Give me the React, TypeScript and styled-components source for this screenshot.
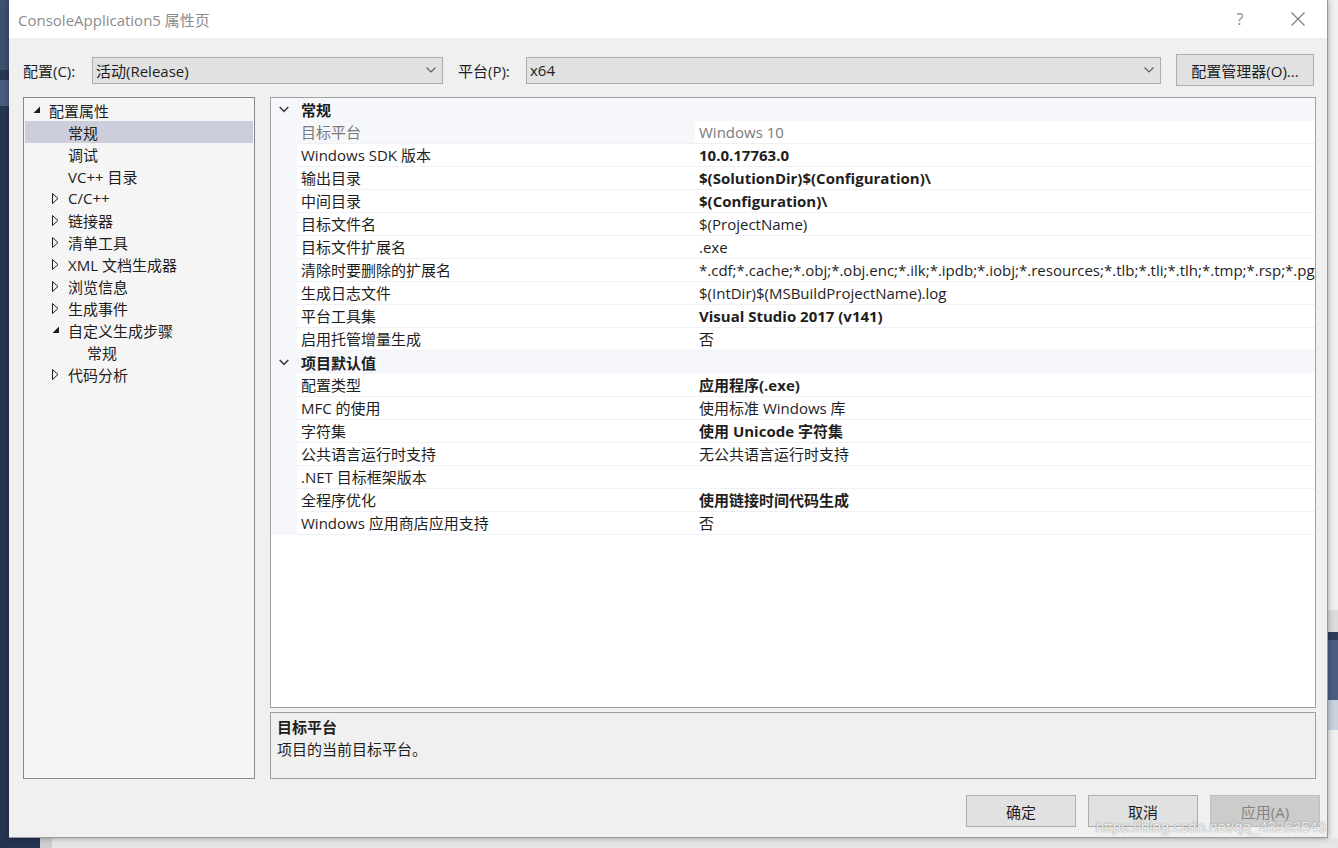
import React from "react";
import styled, { createGlobalStyle } from "styled-components";

const Global = createGlobalStyle`
  html, body { margin: 0; padding: 0; }
  body {
    width: 1338px;
    height: 848px;
    overflow: hidden;
    font-family: "Open Sans", "Noto Sans CJK SC", sans-serif;
    font-size: 15px;
    color: #1e1e1e;
  }
`;

const Desktop = styled.div`
  position: relative;
  width: 1338px;
  height: 848px;
  display: flex;
  background:
    linear-gradient(to bottom, #3f4f6e 0 70px, #2a3852 70px 80px, #4a5d80 80px 106px, #27364f 106px);
`;

const LeftGap = styled.div`
  width: 9px;
  flex: none;
`;

const RightGap = styled.div`
  flex: 1;
  background: linear-gradient(to bottom, #f0f0f0 0 610px, #dcdcdc 610px 632px, #2d3d5c 632px 640px, #4a5e84 640px 700px, #c9d1df 700px 730px, #f0f0f0 730px);
`;

const Dialog = styled.div`
  position: relative;
  width: 1319px;
  height: 838px;
  background: #f0f0f0;
  display: flex;
  flex-direction: column;
  box-shadow: 0 0 6px rgba(0, 0, 0, 0.35);
  border-right: 1px solid #9a9a9a;
  border-bottom: 1px solid #9a9a9a;
  box-sizing: border-box;
  z-index: 1;
`;

const TitleBar = styled.div`
  height: 38px;
  background: #ffffff;
  display: flex;
  align-items: center;
  padding-left: 9px;
  flex: none;
`;

const Title = styled.div`
  flex: 1;
  color: #8c8c8c;
  font-size: 15px;
`;

const TitleBtn = styled.div`
  width: 58px;
  height: 38px;
  display: flex;
  align-items: center;
  justify-content: center;
  color: #8c8c8c;
  font-size: 16px;
`;

const ConfigRow = styled.div`
  display: flex;
  align-items: center;
  height: 32px;
  margin-top: 16px;
  padding: 0 11px 0 14px;
`;

const Label = styled.span<{ $w: number; $gap?: number }>`
  width: ${(p) => p.$w}px;
  padding-left: ${(p) => p.$gap ?? 0}px;
  flex: none;
`;

const Combo = styled.div<{ $w: number }>`
  width: ${(p) => p.$w}px;
  height: 27px;
  box-sizing: border-box;
  background: #e1e1e1;
  border: 1px solid #adadad;
  display: flex;
  align-items: center;
  padding: 0 6px 0 3px;
  flex: none;
`;

const ComboText = styled.span`
  flex: 1;
`;

const Button = styled.div<{ $disabled?: boolean }>`
  width: 110px;
  height: 32px;
  box-sizing: border-box;
  background: ${(p) => (p.$disabled ? "#cccccc" : "#e1e1e1")};
  border: 1px solid ${(p) => (p.$disabled ? "#bfbfbf" : "#adadad")};
  color: ${(p) => (p.$disabled ? "#838383" : "#1e1e1e")};
  display: flex;
  align-items: center;
  justify-content: center;
  flex: none;
`;

const WideButton = styled(Button)`
  width: 138px;
  margin-left: 15px;
`;

const Main = styled.div`
  display: flex;
  margin-top: 11px;
  padding: 0 11px 0 14px;
  gap: 15px;
  height: 682px;
`;

const Tree = styled.div`
  width: 232px;
  flex: none;
  box-sizing: border-box;
  background: #f5f5f5;
  border: 1px solid #828790;
  padding: 1px 1px;
`;

const TreeRow = styled.div<{ $level: number; $selected?: boolean }>`
  height: 22px;
  display: flex;
  align-items: center;
  padding-left: ${(p) => 5 + p.$level * 19}px;
  background: ${(p) => (p.$selected ? "#cccedb" : "transparent")};
`;

const Twisty = styled.span`
  width: 19px;
  flex: none;
  display: flex;
  align-items: center;
  padding-left: 3px;
  box-sizing: border-box;
`;

const RightCol = styled.div`
  flex: 1;
  display: flex;
  flex-direction: column;
  gap: 4px;
`;

const Grid = styled.div`
  flex: 1;
  box-sizing: border-box;
  background: #ffffff;
  border: 1px solid #a0a0a0;
  overflow: hidden;
`;

const CatRow = styled.div`
  height: 23px;
  display: flex;
  align-items: center;
  background: #f5f7fa;
  font-weight: 700;
`;

const CatChevron = styled.span`
  width: 26px;
  flex: none;
  display: flex;
  justify-content: center;
`;

const CatText = styled.span`
  padding-left: 4px;
`;

const PropRow = styled.div<{ $readonly?: boolean }>`
  height: 23px;
  display: grid;
  grid-template-columns: 26px 398px minmax(0, 1fr);
  background: #ffffff;
  & > span:nth-child(1) {
    background: #f5f7fa;
  }
  & > span:nth-child(2) {
    background: ${(p) => (p.$readonly ? "#f5f7fa" : "#ffffff")};
    color: ${(p) => (p.$readonly ? "#7a7a7a" : "inherit")};
  }
  & > span:nth-child(3) {
    color: ${(p) => (p.$readonly ? "#7a7a7a" : "inherit")};
  }
`;

const Cell = styled.span<{ $bold?: boolean }>`
  display: block;
  line-height: 22px;
  padding-left: 4px;
  white-space: nowrap;
  overflow: hidden;
  border-bottom: 1px solid #f0f1f4;
  font-weight: ${(p) => (p.$bold ? 700 : 400)};
`;

const Gutter = styled.span`
  display: block;
`;

const Desc = styled.div`
  height: 67px;
  flex: none;
  box-sizing: border-box;
  border: 1px solid #a0a0a0;
  padding: 3px 6px;
  line-height: 22px;
`;

const DescTitle = styled.div`
  font-weight: 700;
`;

const Footer = styled.div`
  display: flex;
  justify-content: flex-end;
  gap: 12px;
  padding: 16px 7px 0 0;
`;

const Watermark = styled.div`
  position: absolute;
  right: 1px;
  bottom: 2px;
  color: rgba(255, 255, 255, 0.85);
  font-family: "Liberation Sans", sans-serif;
  font-size: 15px;
  text-shadow: 0 0 1px rgba(90, 90, 90, 0.6), 0 0 2px rgba(120, 120, 120, 0.35);
`;

const BottomStrip = styled.div`
  position: absolute;
  left: 0;
  bottom: 0;
  width: 1338px;
  height: 10px;
  background: linear-gradient(to right, #243350 0 40px, #cfcfcf 40px 52px, #e6e6e6 52px);
`;

const Chevron = () => (
  <svg width="10" height="6" viewBox="0 0 10 6">
    <path d="M0.5 0.5 L5 5 L9.5 0.5" fill="none" stroke="#606060" strokeWidth="1.2" />
  </svg>
);

const CatIcon = () => (
  <svg width="10" height="7" viewBox="0 0 10 7">
    <path d="M0.7 1 L5 5.3 L9.3 1" fill="none" stroke="#404040" strokeWidth="1.6" />
  </svg>
);

const Expanded = () => (
  <svg width="8" height="8" viewBox="0 0 8 8">
    <path d="M7 0.5 L7 7 L0.5 7 Z" fill="#1e1e1e" />
  </svg>
);

const Collapsed = () => (
  <svg width="7" height="11" viewBox="0 0 7 11">
    <path d="M0.5 0.5 L6 5.5 L0.5 10.5 Z" fill="none" stroke="#1e1e1e" strokeWidth="1" />
  </svg>
);

type Node = { label: string; level: number; state?: "open" | "closed"; selected?: boolean };

const tree: Node[] = [
  { label: "配置属性", level: 0, state: "open" },
  { label: "常规", level: 1, selected: true },
  { label: "调试", level: 1 },
  { label: "VC++ 目录", level: 1 },
  { label: "C/C++", level: 1, state: "closed" },
  { label: "链接器", level: 1, state: "closed" },
  { label: "清单工具", level: 1, state: "closed" },
  { label: "XML 文档生成器", level: 1, state: "closed" },
  { label: "浏览信息", level: 1, state: "closed" },
  { label: "生成事件", level: 1, state: "closed" },
  { label: "自定义生成步骤", level: 1, state: "open" },
  { label: "常规", level: 2 },
  { label: "代码分析", level: 1, state: "closed" },
];

type Prop = { name: string; value: string; bold?: boolean; readonly?: boolean };

const general: Prop[] = [
  { name: "目标平台", value: "Windows 10", readonly: true },
  { name: "Windows SDK 版本", value: "10.0.17763.0", bold: true },
  { name: "输出目录", value: "$(SolutionDir)$(Configuration)\\", bold: true },
  { name: "中间目录", value: "$(Configuration)\\", bold: true },
  { name: "目标文件名", value: "$(ProjectName)" },
  { name: "目标文件扩展名", value: ".exe" },
  {
    name: "清除时要删除的扩展名",
    value:
      "*.cdf;*.cache;*.obj;*.obj.enc;*.ilk;*.ipdb;*.iobj;*.resources;*.tlb;*.tli;*.tlh;*.tmp;*.rsp;*.pgc;*.pgd;*.meta;*.tlog;*.manifest;*.res;*.pch;*.exp;*.idb;*.rep;*.xdc;*.pdb;*_manifest.rc;*.bsc;*.sbr;*.xml;*.metagen;*.bi",
  },
  { name: "生成日志文件", value: "$(IntDir)$(MSBuildProjectName).log" },
  { name: "平台工具集", value: "Visual Studio 2017 (v141)", bold: true },
  { name: "启用托管增量生成", value: "否" },
];

const defaults: Prop[] = [
  { name: "配置类型", value: "应用程序(.exe)", bold: true },
  { name: "MFC 的使用", value: "使用标准 Windows 库" },
  { name: "字符集", value: "使用 Unicode 字符集", bold: true },
  { name: "公共语言运行时支持", value: "无公共语言运行时支持" },
  { name: ".NET 目标框架版本", value: "" },
  { name: "全程序优化", value: "使用链接时间代码生成", bold: true },
  { name: "Windows 应用商店应用支持", value: "否" },
];

const Props = ({ items }: { items: Prop[] }) => (
  <>
    {items.map((p) => (
      <PropRow key={p.name} $readonly={p.readonly}>
        <Gutter />
        <Cell>{p.name}</Cell>
        <Cell $bold={p.bold}>{p.value}</Cell>
      </PropRow>
    ))}
  </>
);

export default function App() {
  return (
    <>
      <Global />
      <Desktop>
        <LeftGap />
        <Dialog>
          <TitleBar>
            <Title>ConsoleApplication5 属性页</Title>
            <TitleBtn>?</TitleBtn>
            <TitleBtn>
              <svg width="14" height="14" viewBox="0 0 14 14">
                <path d="M0.5 0.5 L13.5 13.5 M13.5 0.5 L0.5 13.5" stroke="#7a7a7a" strokeWidth="1.1" />
              </svg>
            </TitleBtn>
          </TitleBar>

          <ConfigRow>
            <Label $w={69}>配置(C):</Label>
            <Combo $w={351}>
              <ComboText>活动(Release)</ComboText>
              <Chevron />
            </Combo>
            <Label $w={68} $gap={15}>平台(P):</Label>
            <Combo $w={635}>
              <ComboText>x64</ComboText>
              <Chevron />
            </Combo>
            <WideButton>配置管理器(O)...</WideButton>
          </ConfigRow>

          <Main>
            <Tree>
              {tree.map((n, i) => (
                <TreeRow key={i} $level={n.level} $selected={n.selected}>
                  <Twisty>
                    {n.state === "open" && <Expanded />}
                    {n.state === "closed" && <Collapsed />}
                  </Twisty>
                  {n.label}
                </TreeRow>
              ))}
            </Tree>

            <RightCol>
              <Grid>
                <CatRow>
                  <CatChevron>
                    <CatIcon />
                  </CatChevron>
                  <CatText>常规</CatText>
                </CatRow>
                <Props items={general} />
                <CatRow>
                  <CatChevron>
                    <CatIcon />
                  </CatChevron>
                  <CatText>项目默认值</CatText>
                </CatRow>
                <Props items={defaults} />
              </Grid>
              <Desc>
                <DescTitle>目标平台</DescTitle>
                <div>项目的当前目标平台。</div>
              </Desc>
            </RightCol>
          </Main>

          <Footer>
            <Button>确定</Button>
            <Button>取消</Button>
            <Button $disabled>应用(A)</Button>
          </Footer>
          <Watermark>https://blog.csdn.net/qq_43263543</Watermark>
        </Dialog>
        <RightGap />
        <BottomStrip />
      </Desktop>
    </>
  );
}
